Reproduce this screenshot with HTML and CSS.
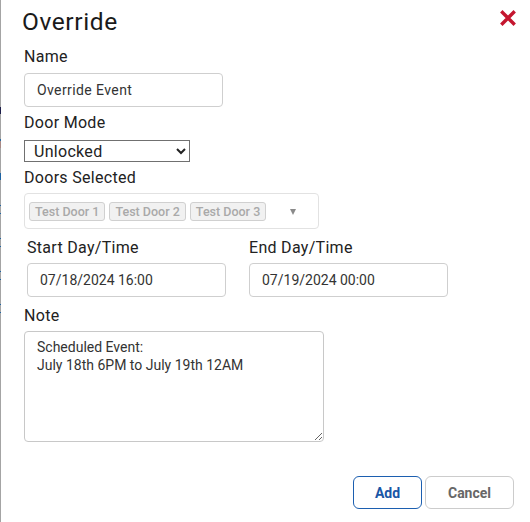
FILE: index.html
```html
<!DOCTYPE html>
<html lang="en">
<head>
<meta charset="utf-8">
<title>Override</title>
<link rel="stylesheet" href="styles.css">
</head>
<body>
<div class="dialog">
  <header class="head">
    <h1 class="title">Override</h1>
    <button class="close" aria-label="Close">
      <svg width="16" height="16" viewBox="0 0 16 16"><path d="M2.5 2.5 L13.5 13.5 M13.5 2.5 L2.5 13.5" stroke="#c4162f" stroke-width="3.4" stroke-linecap="square" fill="none"/></svg>
    </button>
  </header>

  <div class="field f-name">
    <label class="lbl">Name</label>
    <input class="txt w199 wide" type="text" value="Override Event">
  </div>

  <div class="field f-mode">
    <label class="lbl">Door Mode</label>
    <select class="sel">
      <option>Unlocked</option>
      <option>Locked</option>
    </select>
  </div>

  <div class="field f-doors">
    <label class="lbl">Doors Selected</label>
    <div class="multi">
      <span class="tag">Test Door 1</span>
      <span class="tag">Test Door 2</span>
      <span class="tag">Test Door 3</span>
      <span class="caret"></span>
    </div>
  </div>

  <div class="row2">
    <div class="field">
      <label class="lbl">Start Day/Time</label>
      <input class="txt w199" type="text" value="07/18/2024 16:00">
    </div>
    <div class="field">
      <label class="lbl">End Day/Time</label>
      <input class="txt w199" type="text" value="07/19/2024 00:00">
    </div>
  </div>

  <div class="field f-note">
    <label class="lbl">Note</label>
    <textarea class="note">Scheduled Event:
July 18th 6PM to July 19th 12AM</textarea>
  </div>

  <div class="actions">
    <button class="btn btn-add">Add</button>
    <button class="btn btn-cancel">Cancel</button>
  </div>
</div>
</body>
</html>
```

FILE: styles.css
```css
* { box-sizing: border-box; }

html, body {
  margin: 0;
  padding: 0;
  background: #fff;
}

body {
  font-family: Roboto, "Noto Sans", "Liberation Sans", sans-serif;
  color: #222;
  width: 530px;
  height: 522px;
  overflow: hidden;
  background:
    linear-gradient(to bottom,
      #a4a4a4 0, #a4a4a4 107px,
      #1c1d4a 107px, #1c1d4a 114px,
      #a4a4a4 114px, #a4a4a4 139px,
      #2a6aa0 139px, #2a6aa0 141px,
      #a98a86 141px, #a98a86 148px,
      #a4a4a4 148px, #a4a4a4 173px,
      #1d63a2 173px, #1d63a2 180px,
      #a4a4a4 180px, #a4a4a4 205px,
      #1d63a2 205px, #1d63a2 206px,
      #a4a4a4 206px, #a4a4a4 213px,
      #1d63a2 213px, #1d63a2 214px,
      #a4a4a4 214px, #a4a4a4 238px,
      #1d63a2 238px, #1d63a2 239px,
      #a4a4a4 239px, #a4a4a4 246px,
      #1d63a2 246px, #1d63a2 247px,
      #a4a4a4 247px, #a4a4a4 271px,
      #1d63a2 271px, #1d63a2 272px,
      #a4a4a4 272px, #a4a4a4 279px,
      #1d63a2 279px, #1d63a2 280px,
      #a4a4a4 280px, #a4a4a4 304px,
      #1d63a2 304px, #1d63a2 305px,
      #a4a4a4 305px, #a4a4a4 312px,
      #1d63a2 312px, #1d63a2 313px,
      #a4a4a4 313px, #a4a4a4 100%) no-repeat 0 0 / 1px 100%,
    #fff;
}

.dialog {
  display: flex;
  flex-direction: column;
  padding: 8px 16px 0 24px;
}

.head {
  display: flex;
  justify-content: space-between;
  align-items: flex-start;
  height: 28px;
}

.title {
  margin: 0 0 0 -2px;
  font-size: 24.5px;
  line-height: 28px;
  font-weight: 400;
  letter-spacing: 0.6px;
  color: #1a1a1a;
}

.close {
  border: 0;
  background: none;
  padding: 0;
  margin: 2px -2px 0 0;
  width: 16px;
  height: 16px;
  cursor: pointer;
}
.close svg { display: block; }

.field {
  display: flex;
  flex-direction: column;
  align-items: flex-start;
}

.lbl {
  font-size: 16px;
  line-height: 20px;
  letter-spacing: 0.3px;
  color: #222;
  margin-bottom: 6px;
}

.f-name { margin-top: 11px; }
.f-mode { margin-top: 6px; }
.f-mode .lbl { margin-bottom: 7px; }
.f-doors { margin-top: 6px; }
.f-doors .lbl { margin-bottom: 5px; }

.txt {
  height: 34px;
  border: 1px solid #cfcfcf;
  border-radius: 4px;
  padding: 0 12px;
  font-family: inherit;
  font-size: 14px;
  color: #333;
  background: #fff;
  outline: none;
}
.w199 { width: 199px; }
.wide { letter-spacing: 0.4px; }

.sel {
  width: 166px;
  height: 22px;
  font-family: inherit;
  font-size: 16px;
  letter-spacing: 0.3px;
  color: #222;
  padding: 0 0 0 5px;
  border: 1px solid #707070;
  border-radius: 0;
  background: #fff;
}

.multi {
  width: 295px;
  height: 36px;
  border: 1px solid #e2e2e2;
  border-radius: 4px;
  display: flex;
  align-items: center;
  gap: 4px;
  padding: 0 0 0 4px;
}

.tag {
  height: 19px;
  display: inline-flex;
  align-items: center;
  padding: 0 5px;
  background: #f1f1f1;
  border: 1px solid #d0d0d0;
  border-radius: 3px;
  font-size: 12.5px;
  font-weight: 500;
  color: #a9a9a9;
}

.caret {
  width: 0;
  height: 0;
  border-left: 3.5px solid transparent;
  border-right: 3.5px solid transparent;
  border-top: 6px solid #8a8a8a;
  margin-left: 20px;
  margin-top: 2px;
}

.row2 {
  display: flex;
  gap: 23px;
  margin-top: 9px;
  padding-left: 3px;
}
.row2 .lbl { margin-bottom: 5px; }

.f-note { margin-top: 9px; }
.f-note .lbl { margin-bottom: 5px; }

.note {
  width: 300px;
  height: 111px;
  border: 1px solid #c8c8c8;
  border-radius: 4px;
  padding: 6px 12px;
  font-family: inherit;
  font-size: 14px;
  line-height: 18px;
  color: #333;
  resize: both;
  outline: none;
}

.actions {
  display: flex;
  justify-content: flex-end;
  gap: 3px;
  margin-top: 34px;
}

.btn {
  height: 33px;
  border-radius: 6px;
  background: #fff;
  font-family: inherit;
  font-size: 14px;
  font-weight: 700;
  cursor: pointer;
}

.btn-add {
  width: 69px;
  border: 1px solid #1c5fb0;
  color: #1a56a6;
}

.btn-cancel {
  width: 89px;
  border: 1px solid #cccccc;
  color: #676767;
}
```
